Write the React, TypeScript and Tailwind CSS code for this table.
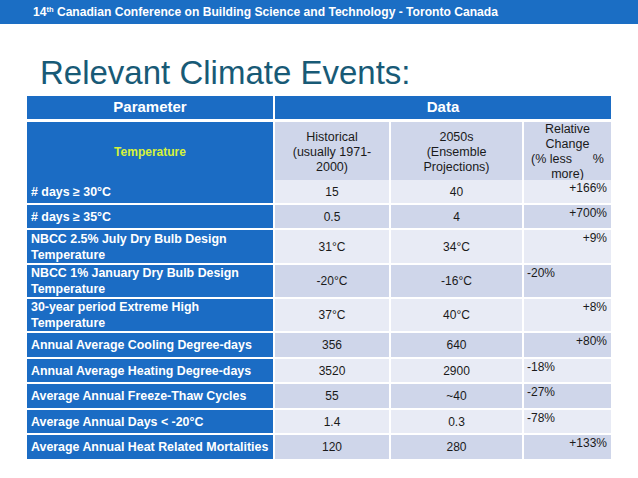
import React from 'react';

type Row = {
  label: string;
  hist: string;
  proj: string;
  change: string;
  h: string;
  dark: boolean;
};

const rows: Row[] = [
  { label: '# days ≥ 30°C', hist: '15', proj: '40', change: '+166%', h: 'h-[23px]', dark: false },
  { label: '# days ≥ 35°C', hist: '0.5', proj: '4', change: '+700%', h: 'h-[23px]', dark: true },
  { label: 'NBCC 2.5% July Dry Bulb Design Temperature', hist: '31°C', proj: '34°C', change: '+9%', h: 'h-[33px]', dark: false },
  { label: 'NBCC 1% January Dry Bulb Design Temperature', hist: '-20°C', proj: '-16°C', change: '-20%', h: 'h-[32px]', dark: true },
  { label: '30-year period Extreme High Temperature', hist: '37°C', proj: '40°C', change: '+8%', h: 'h-[32px]', dark: false },
  { label: 'Annual Average Cooling Degree-days', hist: '356', proj: '640', change: '+80%', h: 'h-[24px]', dark: true },
  { label: 'Annual Average Heating Degree-days', hist: '3520', proj: '2900', change: '-18%', h: 'h-[23px]', dark: false },
  { label: 'Average Annual Freeze-Thaw Cycles', hist: '55', proj: '~40', change: '-27%', h: 'h-[24px]', dark: true },
  { label: 'Average Annual Days < -20°C', hist: '1.4', proj: '0.3', change: '-78%', h: 'h-[23px]', dark: false },
  { label: 'Average Annual Heat Related Mortalities', hist: '120', proj: '280', change: '+133%', h: 'h-[24px]', dark: true },
];

const cols = 'grid grid-cols-[246px_114px_131px_87px] gap-x-[2px]';

export default function App() {
  return (
    <div className="w-[638px] h-[478px] bg-white overflow-hidden font-['Liberation_Sans',Arial,sans-serif]">
      <div className="h-[24px] bg-[#1b6ec4] pl-[33px] flex items-center text-[12.1px] font-bold text-white">
        <span>
          14<sup className="text-[7.5px]">th</sup> Canadian Conference on Building Science and Technology - Toronto Canada
        </span>
      </div>

      <h1 className="mt-[32px] pl-[40px] text-[33px] leading-[33px] text-[#185a76]">Relevant Climate Events:</h1>

      <div className="mt-[7px] ml-[27px] w-[584px] flex flex-col gap-y-[2px] bg-white">
        <div className={`${cols} h-[23px]`}>
          <div className="bg-[#1b6cc4] flex items-center justify-center text-[15px] font-bold text-white">Parameter</div>
          <div className="col-span-3 bg-[#1b6cc4] flex items-center justify-center text-[15px] font-bold text-white">Data</div>
        </div>

        <div className={`${cols} h-[56px] mt-[1px]`}>
          <div className="bg-[#1b6cc4] flex items-center justify-center text-[12px] font-bold text-[#d6f23a]">Temperature</div>
          <div className="bg-[#cfd6ea] flex items-center justify-center text-center text-[12.5px] leading-[15px] text-[#1a1a1a]">
            Historical<br />(usually 1971-<br />2000)
          </div>
          <div className="bg-[#cfd6ea] flex items-center justify-center text-center text-[12.5px] leading-[15px] text-[#1a1a1a]">
            2050s<br />(Ensemble<br />Projections)
          </div>
          <div className="bg-[#cfd6ea] flex items-center justify-center text-center text-[12.5px] leading-[15px] text-[#1a1a1a]">
            <span>
              Relative<br />Change<br /><span className="whitespace-pre">(% less      %</span><br />more)
            </span>
          </div>
        </div>

        {rows.map((r) => {
          const bg = r.dark ? 'bg-[#cfd6ea]' : 'bg-[#e8ebf5]';
          const plus = r.change.startsWith('+');
          return (
            <div key={r.label} className={`${cols} ${r.h}`}>
              <div className="bg-[#1b6cc4] flex items-center pl-[4px] pr-[2px] text-[12.4px] leading-[16px] font-bold text-white">
                {r.label}
              </div>
              <div className={`${bg} flex items-center justify-center text-[12px] text-[#1a1a1a]`}>{r.hist}</div>
              <div className={`${bg} flex items-center justify-center text-[12px] text-[#1a1a1a]`}>{r.proj}</div>
              <div
                className={`${bg} pt-[1px] text-[12px] leading-[15px] text-[#1a1a1a] ${plus ? 'text-right pr-[4px]' : 'text-left pl-[3px]'}`}
              >
                {r.change}
              </div>
            </div>
          );
        })}
      </div>
    </div>
  );
}
